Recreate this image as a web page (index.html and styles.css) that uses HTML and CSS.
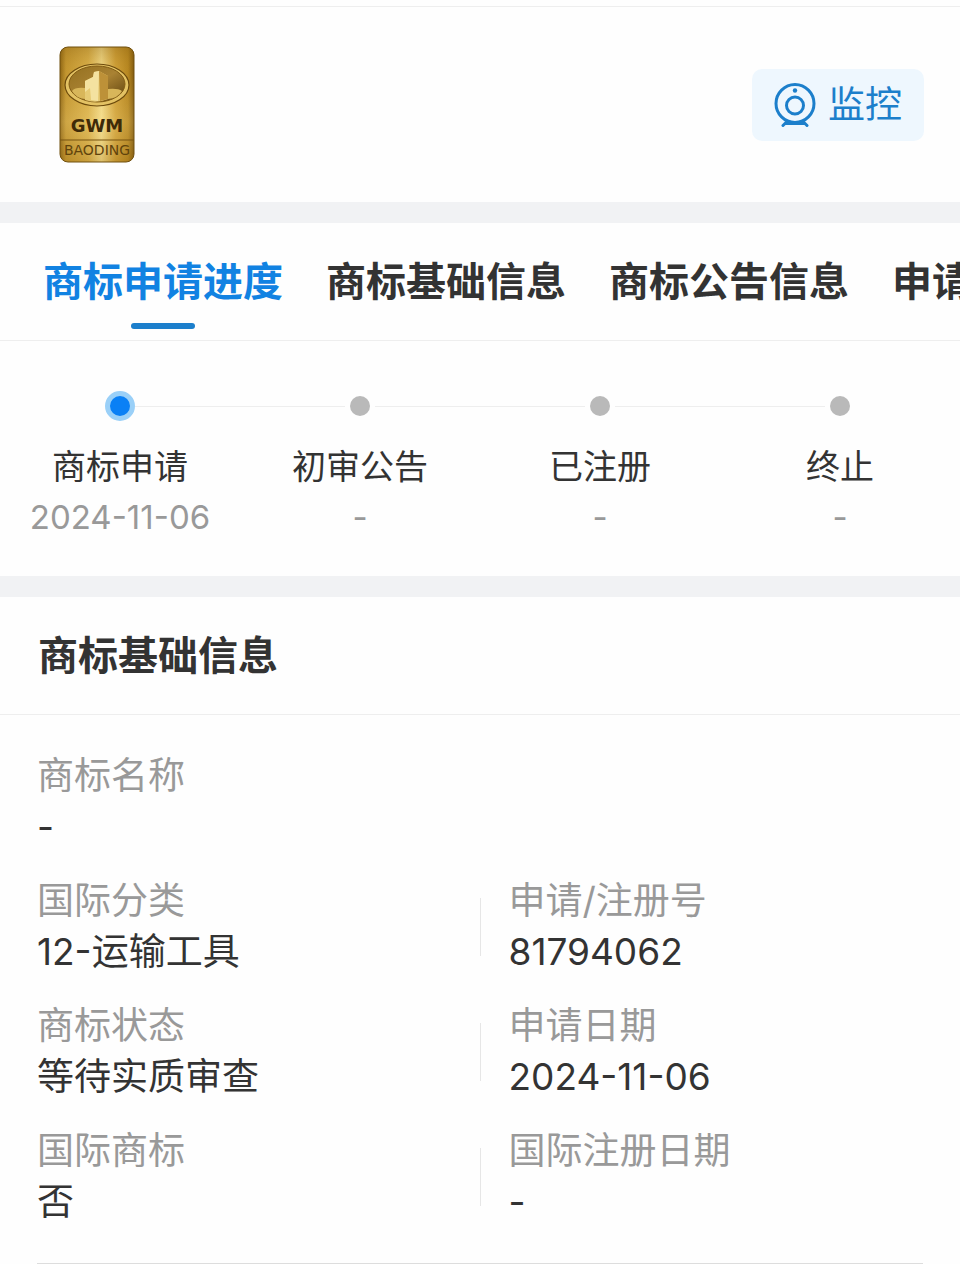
FILE: index.html
```html
<!DOCTYPE html>
<html lang="zh-CN">
<head>
<meta charset="utf-8">
<meta name="viewport" content="width=device-width, initial-scale=1">
<title>商标详情</title>
<link rel="stylesheet" href="styles.css">
</head>
<body>
<header class="header">
  <svg class="logo" width="76" height="118" viewBox="0 0 76 118" role="img" aria-label="GWM BAODING">
    <defs>
      <linearGradient id="gold" x1="0" y1="0" x2="1" y2="0">
        <stop offset="0" stop-color="#8a6212"/>
        <stop offset=".08" stop-color="#c2952f"/>
        <stop offset=".38" stop-color="#d9b04a"/>
        <stop offset=".56" stop-color="#f3dc8c"/>
        <stop offset=".75" stop-color="#cfa038"/>
        <stop offset=".92" stop-color="#b5851f"/>
        <stop offset="1" stop-color="#7b540c"/>
      </linearGradient>
      <linearGradient id="shade" x1="0" y1="0" x2="0" y2="1">
        <stop offset="0" stop-color="#8a6010" stop-opacity=".35"/>
        <stop offset=".2" stop-color="#c2932c" stop-opacity=".1"/>
        <stop offset=".65" stop-color="#ffe89a" stop-opacity=".2"/>
        <stop offset="1" stop-color="#9a6d15" stop-opacity=".25"/>
      </linearGradient>
      <linearGradient id="well" x1="0" y1="0" x2="1" y2="1">
        <stop offset="0" stop-color="#94701f"/>
        <stop offset=".5" stop-color="#a98233"/>
        <stop offset="1" stop-color="#5c400c"/>
      </linearGradient>
    </defs>
    <rect x="1" y="1" width="74" height="115" rx="8" fill="url(#gold)"/>
    <rect x="1" y="1" width="74" height="115" rx="8" fill="url(#shade)" stroke="#71500f"/>
    <ellipse cx="38" cy="39" rx="32" ry="21" fill="#e3c264" stroke="#6c4a0c" stroke-width="1.2"/>
    <ellipse cx="38" cy="38" rx="28" ry="18" fill="url(#well)" stroke="#835d15"/>
    <path d="M13 45q3-4 13-3v11q-9-1-13-8zM63 45q-4-3-14-2v10q10-1 14-8z" fill="#d8b65a"/>
    <path d="M26 35l8-4 1-5 5-1 9 5v23q-12 5-23 1z" fill="#e6ca74"/>
    <path d="M40 25l9 5v23l-8 2z" fill="#bd9138"/>
    <path d="M26 35l8-4 1-5 5-1-1 30-7-1-1-12-5 4z" fill="#f4e2a0"/>
    <text class="logo-name" x="38" y="86" text-anchor="middle">GWM</text>
    <path d="M1 94h74" stroke="#795511" stroke-width="1.2"/>
    <text class="logo-place" x="38" y="109" text-anchor="middle">BAODING</text>
  </svg>
  <button class="monitor" type="button">
    <svg width="42" height="44" viewBox="0 0 42 44" fill="none" stroke="currentColor" stroke-width="3" aria-hidden="true">
      <circle cx="21" cy="20.500" r="19"/>
      <circle cx="21" cy="22.500" r="8.500"/>
      <circle cx="21" cy="7.500" r="2.200" fill="currentColor" stroke="none"/>
      <path d="M13 38.500L9 42.500M29 38.500L33 42.500M12 40.500h18" stroke-linecap="round"/>
    </svg>
    <span>监控</span>
  </button>
</header>

<nav class="tabs" aria-label="商标信息">
  <a class="tab tab-active" href="#progress" aria-current="true">商标申请进度</a>
  <a class="tab" href="#basic">商标基础信息</a>
  <a class="tab" href="#notice">商标公告信息</a>
  <a class="tab" href="#applicant">申请</a>
</nav>

<ol class="steps" id="progress">
  <li class="step step-current"><span class="track"><i class="dot"></i></span><span class="step-name">商标申请</span><span class="step-date">2024-11-06</span></li>
  <li class="step"><span class="track"><i class="dot"></i></span><span class="step-name">初审公告</span><span class="step-date">-</span></li>
  <li class="step"><span class="track"><i class="dot"></i></span><span class="step-name">已注册</span><span class="step-date">-</span></li>
  <li class="step"><span class="track"><i class="dot"></i></span><span class="step-name">终止</span><span class="step-date">-</span></li>
</ol>

<section class="basic" id="basic">
  <h2 class="title">商标基础信息</h2>
  <div class="fields">
    <div class="row">
      <dl class="field"><dt>商标名称</dt><dd>-</dd></dl>
    </div>
    <div class="row">
      <dl class="field"><dt>国际分类</dt><dd>12-运输工具</dd></dl>
      <span class="divider"></span>
      <dl class="field"><dt>申请/注册号</dt><dd>81794062</dd></dl>
    </div>
    <div class="row">
      <dl class="field"><dt>商标状态</dt><dd>等待实质审查</dd></dl>
      <span class="divider"></span>
      <dl class="field"><dt>申请日期</dt><dd>2024-11-06</dd></dl>
    </div>
    <div class="row">
      <dl class="field"><dt>国际商标</dt><dd>否</dd></dl>
      <span class="divider"></span>
      <dl class="field"><dt>国际注册日期</dt><dd>-</dd></dl>
    </div>
  </div>
</section>
</body>
</html>
```

FILE: styles.css
```css
* {
  box-sizing: border-box;
}

body {
  margin: 0;
  padding-top: 6px;
  background: #fefefe;
  color: #333;
  font-family: Inter, "Noto Sans CJK SC", sans-serif;
}

.header {
  display: flex;
  align-items: center;
  justify-content: space-between;
  height: 196px;
  padding: 0 36px 0 59px;
  border-top: 1px solid #eee;
}

.logo-name {
  font: bold 18px "DejaVu Sans", sans-serif;
  fill: #3d2a08;
}

.logo-place {
  font: 14px "DejaVu Sans", sans-serif;
  fill: #60430c;
}

.monitor {
  display: flex;
  align-items: center;
  gap: 12px;
  height: 72px;
  padding: 0 22px;
  border: 0;
  border-radius: 10px;
  background: #eef7fe;
  color: #1c7fcb;
  font-family: inherit;
  font-size: 37px;
  line-height: 51px;
}

.tabs {
  display: flex;
  gap: 43px;
  overflow: hidden;
  padding: 0 43px;
  border-top: 21px solid #f1f2f4;
  border-bottom: 1px solid #eee;
}

.tab {
  position: relative;
  flex: none;
  color: #333;
  font-size: 40px;
  font-weight: 700;
  line-height: 117px;
  text-decoration: none;
}

.tab-active {
  color: #1182e2;
}

.tab-active::after {
  content: "";
  position: absolute;
  bottom: 11px;
  left: calc(50% - 32px);
  width: 64px;
  height: 6px;
  border-radius: 3px;
  background: #1c7fcc;
}

.steps {
  display: flex;
  margin: 0;
  padding: 50px 0 33px;
  border-bottom: 21px solid #f1f2f4;
  list-style: none;
}

.step {
  display: flex;
  flex: 1;
  flex-direction: column;
  align-items: center;
}

.track {
  display: flex;
  align-items: center;
  align-self: stretch;
  height: 30px;
  margin-bottom: 20px;
}

.track::before,
.track::after {
  content: "";
  flex: 1;
  height: 1px;
  background: #eee;
}

.step:first-child .track::before,
.step:last-child .track::after {
  background: none;
}

.dot {
  width: 20px;
  height: 20px;
  margin: 0 5px;
  border-radius: 50%;
  background: #b9b9b9;
}

.step-current .dot {
  width: 30px;
  height: 30px;
  margin: 0;
  border: 5px solid #9ad0f8;
  background: #0a80f5;
}

.step-name {
  font-size: 34px;
  line-height: 51px;
}

.step-date {
  color: #999;
  font-size: 33px;
  line-height: 51px;
}

.title {
  margin: 0;
  padding: 0 38px;
  border-bottom: 1px solid #eee;
  font-size: 40px;
  font-weight: 700;
  line-height: 117px;
}

.fields {
  display: flex;
  flex-direction: column;
  gap: 22px;
  margin: 0 37px;
  padding: 35px 0;
  border-bottom: 1px solid #ddd;
}

.row {
  display: flex;
  align-items: center;
}

.field {
  flex: 1;
  margin: 0;
  font-size: 37px;
}

.field dt {
  color: #999;
  line-height: 51px;
}

.field dd {
  margin: 0;
  line-height: 52px;
}

.divider {
  width: 1px;
  height: 58px;
  margin: 0 28px;
  background: #e6e6e6;
}
```
